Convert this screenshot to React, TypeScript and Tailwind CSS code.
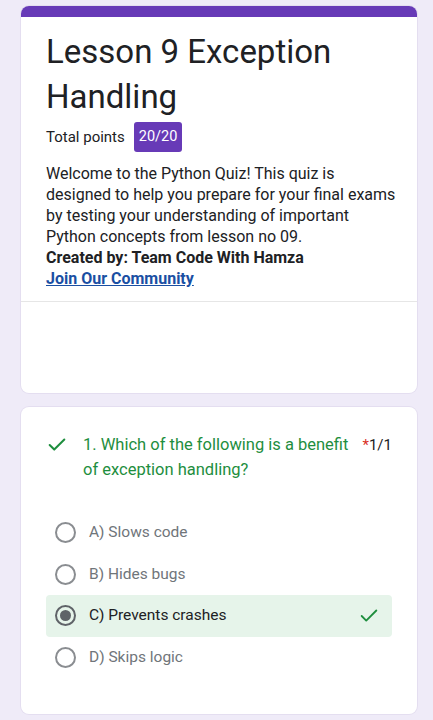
import { Check } from "lucide-react";

const options = [
  { label: "A) Slows code", picked: false },
  { label: "B) Hides bugs", picked: false },
  { label: "C) Prevents crashes", picked: true },
  { label: "D) Skips logic", picked: false },
];

function Radio({ on }: { on: boolean }) {
  return (
    <span
      className={`flex h-[21px] w-[21px] shrink-0 items-center justify-center rounded-full border-2 ${
        on ? "border-[#5f6368]" : "border-[#8a8d91]"
      }`}
    >
      {on ? <span className="h-[11px] w-[11px] rounded-full bg-[#5f6368]" /> : null}
    </span>
  );
}

export default function App() {
  return (
    <div className="min-h-[720px] bg-[#efebf8] pt-[6px] pb-4 font-['Roboto',sans-serif] text-[#202124]">
      <div className="ml-[21px] w-[396px] overflow-hidden rounded-lg bg-white shadow-[0_0_0_1px_#e4def0]">
        <div className="h-[11px] bg-[#673ab7]" />
        <div className="pl-[25px] pr-[20px] pt-[12px] pb-[12px]">
          <h1 className="text-[33px] leading-[45px] font-normal text-[#202124]">
            Lesson 9 Exception Handling
          </h1>
          <div className="mt-[3px] flex items-center gap-[9px]">
            <span className="text-[15px]">Total points</span>
            <span className="rounded-[3px] bg-[#673ab7] px-[5px] py-[5px] text-[14.5px] leading-5 text-white">
              20/20
            </span>
          </div>
          <div className="mt-[11px] text-[16px] leading-[21px]">
            <p>
              Welcome to the Python Quiz! This quiz is designed to help you prepare for your final
              exams by testing your understanding of important Python concepts from lesson no 09.
            </p>
            <p className="font-bold">Created by: Team Code With Hamza</p>
            <a className="font-bold text-[#1a4fa3] underline" href="#">
              Join Our Community
            </a>
          </div>
        </div>
        <div className="h-[92px] border-t border-[#e6e6e6]" />
      </div>

      <div className="mt-[14px] ml-[21px] w-[396px] rounded-lg bg-white px-[25px] pt-[25px] pb-[36px] shadow-[0_0_0_1px_#e4def0]">
        <div className="flex items-start">
          <Check className="mt-[2px] mr-[15px] h-[22px] w-[22px] shrink-0 text-[#1e8e3e]" strokeWidth={2.2} />
          <p className="flex-1 pr-2 text-[16.5px] leading-[25px] text-[#1e8e3e]">
            1. Which of the following is a benefit of exception handling?
          </p>
          <span className="mt-[2px] text-[15px] leading-[22px]">
            <span className="text-[#d93025]">*</span>1/1
          </span>
        </div>
        <div className="mt-[30px] flex flex-col">
          {options.map((o) => (
            <div
              key={o.label}
              className={`flex h-[41.5px] items-center rounded-[4px] pl-[9px] pr-[12px] ${
                o.picked ? "bg-[#e6f4ea]" : ""
              }`}
            >
              <Radio on={o.picked} />
              <span
                className={`ml-[13px] flex-1 text-[15.5px] ${o.picked ? "text-[#202124]" : "text-[#70757a]"}`}
              >
                {o.label}
              </span>
              {o.picked ? <Check className="h-[22px] w-[22px] text-[#1e8e3e]" strokeWidth={2} /> : null}
            </div>
          ))}
        </div>
      </div>
    </div>
  );
}
